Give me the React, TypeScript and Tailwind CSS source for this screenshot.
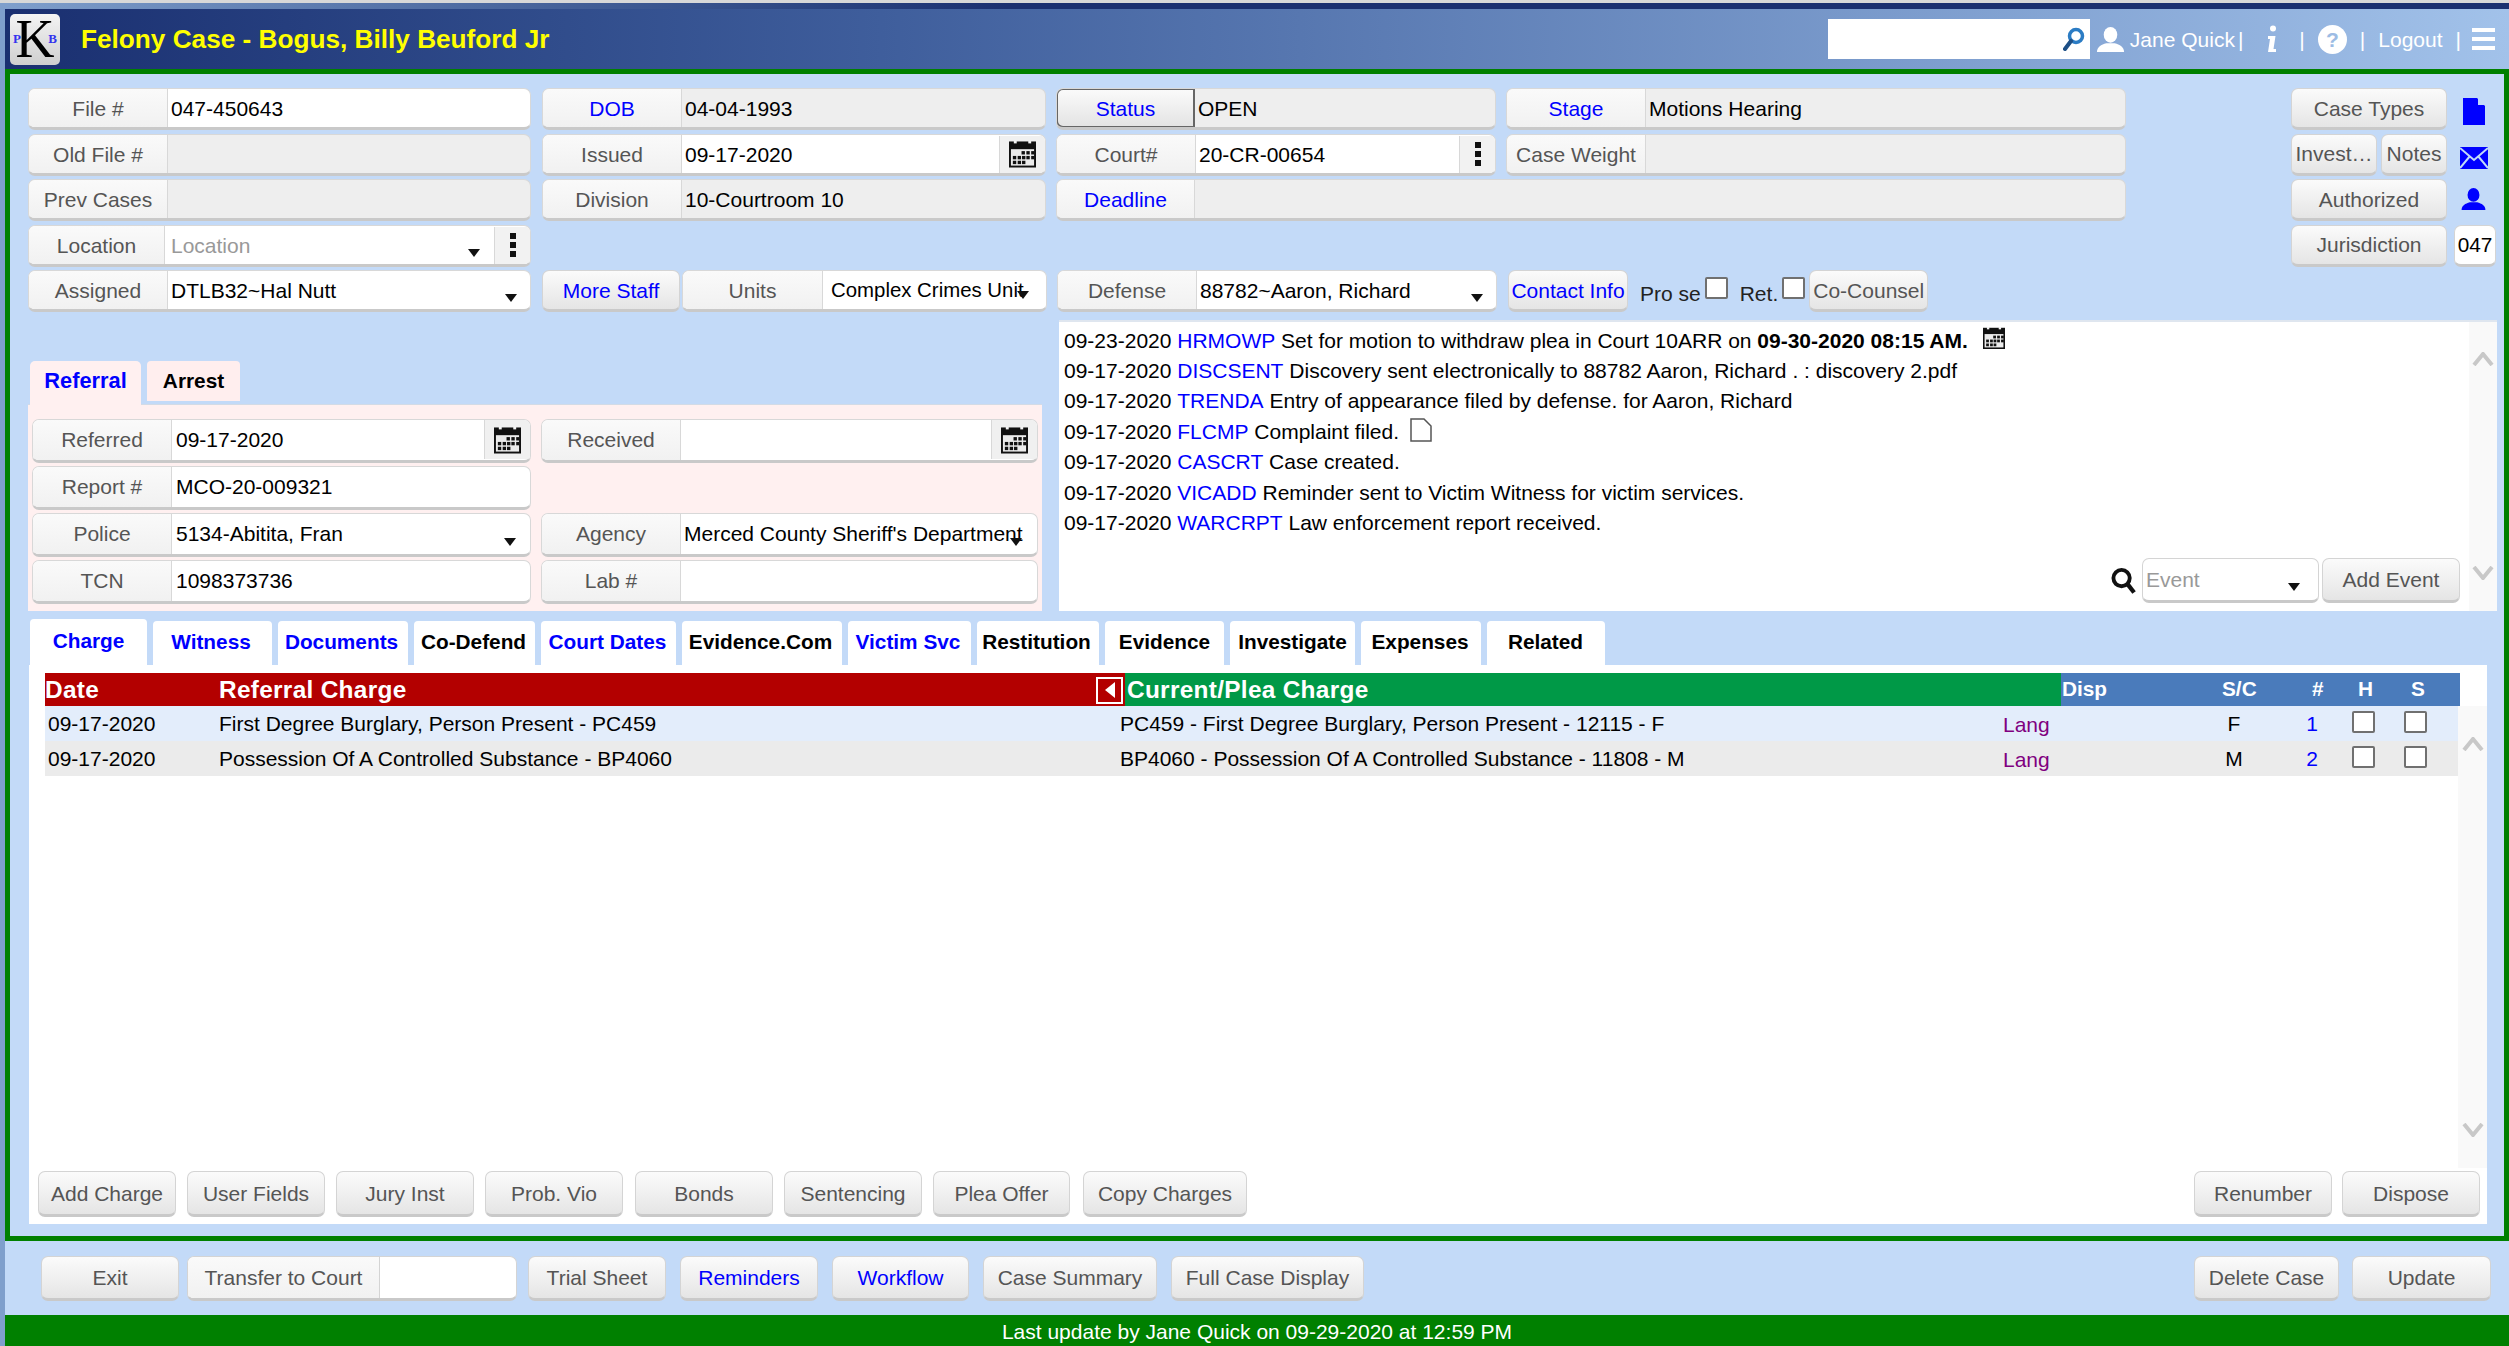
import { ReactNode } from "react"
import clsx from "clsx"

const Caret = ({ className }: { className?: string }) => (
  <svg viewBox="0 0 12 8" className={clsx("absolute h-[8px] w-[12px]", className)}>
    <path d="M0 0h12L6 8z" fill="#111" />
  </svg>
)

const Dots = () => (
  <svg viewBox="0 0 6 24" className="h-[24px] w-[6px]">
    <rect x="0" y="0" width="6" height="6" fill="#111" />
    <rect x="0" y="9" width="6" height="6" fill="#111" />
    <rect x="0" y="18" width="6" height="6" fill="#111" />
  </svg>
)

const calDots = [
  [13, 11],
  [18, 11],
  [23, 11],
  [4, 16],
  [9, 16],
  [13.500, 16],
  [18, 16],
  [23, 16],
  [4, 21],
  [9, 21],
  [13.500, 21],
]

const Calendar = ({ className }: { className?: string }) => (
  <svg viewBox="0 0 28 28" className={className}>
    <rect x="0" y="1" width="28" height="27" fill="#111" />
    <rect x="2" y="9" width="24" height="17" fill="#ececec" />
    <rect x="5" y="0" width="3" height="3" fill="#f4f4f4" />
    <rect x="20" y="0" width="3" height="3" fill="#f4f4f4" />
    {calDots.map(([x, y]) => (
      <rect key={`${x}-${y}`} x={x} y={y} width="3.500" height="3.500" fill="#111" />
    ))}
  </svg>
)

const PersonIcon = ({ className, color }: { className?: string; color: string }) => (
  <svg viewBox="0 0 26 24" className={className}>
    <ellipse cx="13" cy="7.500" rx="6.500" ry="7.500" fill={color} />
    <path d="M0 24c0-5 4-7 9-8.500h8c5 1.500 9 3.500 9 8.500z" fill={color} />
  </svg>
)

const Chevron = ({ up }: { up?: boolean }) => (
  <svg viewBox="0 0 22 14" className="h-[14px] w-[22px]">
    <path d={up ? "M2 13 L11 2 L20 13" : "M2 1 L11 12 L20 1"} fill="none" stroke="#c8c8c8" strokeWidth="4" />
  </svg>
)

const Check = ({ className }: { className?: string }) => (
  <span className={clsx("block h-[22px] w-[23px] shrink-0 rounded-[2px] border-2 border-[#707070] bg-white", className)} />
)

const Btn = ({ w, blue, h = "h-[45px]", children }: { w: string; blue?: boolean; h?: string; children: ReactNode }) => (
  <div
    className={clsx(
      "flex shrink-0 items-center justify-center rounded-[7px] border border-[#d4d4d4] border-b-[3px] border-b-[#c9c9c9] bg-linear-to-b from-[#fbfbfb] to-[#e5e5e5] whitespace-nowrap",
      blue ? "text-[#0000ff]" : "text-[#555]",
      w,
      h,
    )}
  >
    {children}
  </div>
)

const Field = ({
  w,
  labelW,
  label,
  blue,
  h = "h-[42px]",
  gray,
  children,
  labelClass,
}: {
  w: string
  labelW: string
  label: string
  blue?: boolean
  h?: string
  gray?: boolean
  children?: ReactNode
  labelClass?: string
}) => {
  const nudge = h === "h-[42px]" ? "pt-[1px]" : "pb-[1px]"
  return (
    <div
      className={clsx(
        "relative flex shrink-0 overflow-hidden rounded-[7px] border border-[#d8d8d8] border-b-[3px] border-b-[#c9c9c9]",
        gray ? "bg-[#eeeeee]" : "bg-white",
        w,
        h,
      )}
    >
      <div
        className={clsx(
          "flex shrink-0 items-center justify-center bg-linear-to-b",
          blue ? "text-[#0000ff]" : "text-[#555]",
          labelClass ?? "border-r border-[#d8d8d8] from-[#fafafa] to-[#f1f1f1]",
          labelW,
          nudge,
        )}
      >
        {label}
      </div>
      <div className={clsx("flex min-w-0 flex-1 items-center whitespace-nowrap pl-[3px] text-black", nudge)}>{children}</div>
    </div>
  )
}

const SideCal = () => (
  <div className="flex h-full w-[46px] shrink-0 items-center justify-center border-l border-[#d8d8d8] bg-[#f0f0f0]">
    <Calendar className="h-[28px] w-[27px]" />
  </div>
)

const SideDots = () => (
  <div className="flex h-full w-[36px] shrink-0 items-center justify-center border-l border-[#d8d8d8] bg-[#f2f2f2]">
    <Dots />
  </div>
)

const L = ({ children }: { children: ReactNode }) => <span className="text-[#0000ff]">{children}</span>

const events = [
  ["09-17-2020", "DISCSENT", "Discovery sent electronically to 88782 Aaron, Richard . : discovery 2.pdf"],
  ["09-17-2020", "TRENDA", "Entry of appearance filed by defense. for Aaron, Richard"],
]
const eventsAfter = [
  ["09-17-2020", "CASCRT", "Case created."],
  ["09-17-2020", "VICADD", "Reminder sent to Victim Witness for victim services."],
  ["09-17-2020", "WARCRPT", "Law enforcement report received."],
]

const tabs = [
  { t: "Charge", w: "w-[117px]", blue: true, active: true },
  { t: "Witness", w: "w-[119px] pr-[3px]", blue: true },
  { t: "Documents", w: "w-[130px] pr-[3px]", blue: true },
  { t: "Co-Defend", w: "w-[121px] pr-[2px]" },
  { t: "Court Dates", w: "w-[135px] pr-[2px]", blue: true },
  { t: "Evidence.Com", w: "w-[160px] pr-[3px]" },
  { t: "Victim Svc", w: "w-[123px] pr-[3px]", blue: true },
  { t: "Restitution", w: "w-[122px] pr-[3px]" },
  { t: "Evidence", w: "w-[119px]" },
  { t: "Investigate", w: "w-[125px]" },
  { t: "Expenses", w: "w-[120px] pr-[2px]" },
  { t: "Related", w: "w-[118px] pr-[1px]" },
]

const charges = [
  {
    n: "1",
    ref: "First Degree Burglary, Person Present - PC459",
    cur: "PC459 - First Degree Burglary, Person Present - 12115 - F",
    sc: "F",
    bg: "bg-[#e3edfb]",
  },
  {
    n: "2",
    ref: "Possession Of A Controlled Substance - BP4060",
    cur: "BP4060 - Possession Of A Controlled Substance - 11808 - M",
    sc: "M",
    bg: "bg-[#ebebeb]",
  },
]

const App = () => {
  return (
    <div className="h-[1346px] w-[2509px] overflow-hidden bg-[#7f9fcc] pl-[5px] text-[21px] leading-none [font-family:'Liberation_Sans',Arial,sans-serif]">
      <div className="-ml-[5px] h-[3px] bg-[#d8d8d8]" />
      <div className="h-[6px] bg-linear-to-r from-[#7f9fcc] via-[#1b3070] via-40% to-[#1b3070]" />

      {/* header */}
      <div className="flex h-[60px] items-center bg-linear-to-r from-[#1a2f70] via-[#3f5e9c] via-35% to-[#a2c2ea] pl-[5px]">
        <div className="relative flex h-[51px] w-[50px] shrink-0 items-center justify-center rounded-[5px] bg-linear-to-b from-[#f4f4f4] to-[#cfcfcf]">
          <span className="text-[54px] text-black [font-family:'Liberation_Serif',serif]">K</span>
          <span className="absolute left-[3px] top-[18px] text-[13px] font-bold text-[#3333ee] [font-family:'Liberation_Serif',serif]">P</span>
          <span className="absolute right-[3px] top-[18px] text-[13px] font-bold text-[#3333ee] [font-family:'Liberation_Serif',serif]">B</span>
        </div>
        <div className="ml-[21px] whitespace-nowrap text-[26.2px] font-bold text-[#ffff00]">Felony Case - Bogus, Billy Beuford Jr</div>
        <div className="ml-auto flex items-center pr-[14px] text-white">
          <div className="flex h-[40px] w-[262px] items-center justify-end bg-white pr-[5px]">
            <svg viewBox="0 0 22 24" className="h-[24px] w-[22px]">
              <circle cx="13" cy="9" r="6.500" fill="#fff" stroke="#2b7cc4" strokeWidth="3.500" />
              <path d="M8 14 L2 22" stroke="#1d4f86" strokeWidth="4" strokeLinecap="round" />
            </svg>
          </div>
          <PersonIcon className="ml-[6px] h-[25px] w-[29px]" color="#ffffff" />
          <span className="ml-[5px] whitespace-nowrap">Jane Quick</span>
          <span className="ml-[3px]">|</span>
          <svg viewBox="0 0 14 28" className="ml-[22px] h-[28px] w-[14px]">
            <circle cx="8" cy="3.500" r="3" fill="#fff" />
            <path d="M3 11h7.500l-2 13h2.500v3H3l2-13H3z" fill="#fff" />
          </svg>
          <span className="ml-[20px]">|</span>
          <span className="ml-[13px] flex h-[29px] w-[29px] items-center justify-center rounded-full bg-white text-[21px] font-bold text-[#9dbce4]">?</span>
          <span className="ml-[13px]">|</span>
          <span className="ml-[13px]">Logout</span>
          <span className="ml-[13px]">|</span>
          <svg viewBox="0 0 23 24" className="ml-[11px] h-[24px] w-[23px]">
            <rect y="1" width="23" height="4" fill="#fff" />
            <rect y="10" width="23" height="4" fill="#fff" />
            <rect y="19" width="23" height="4" fill="#fff" />
          </svg>
        </div>
      </div>

      {/* main frame */}
      <div className="flex h-[1172px] flex-col border-[5px] border-[#008000] bg-[#c3daf8] pl-[18px] pt-[14px]">
        <div className="flex flex-col gap-y-[3.5px]">
          <div className="flex">
            <Field w="w-[503px]" labelW="w-[139px]" label="File #">047-450643</Field>
            <Field w="w-[504px] ml-[11px]" labelW="w-[139px]" label="DOB" blue gray>04-04-1993</Field>
            <Field
              w="w-[440px] ml-[10px]"
              labelW="w-[139px]"
              label="Status"
              blue
              gray
              labelClass="-my-px -ml-px border-2 border-[#666] rounded-l-[7px] from-[#fafafa] to-[#e4e4e4]"
            >
              OPEN
            </Field>
            <Field w="w-[620px] ml-[10px]" labelW="w-[139px]" label="Stage" blue gray>Motions Hearing</Field>
            <Btn w="w-[156px] ml-[165px]" h="h-[42px]">Case Types</Btn>
            <svg viewBox="0 0 22 27" className="ml-[16px] mt-[10px] h-[27px] w-[22px]">
              <path d="M0 0h14l8 8v19H0z" fill="#0000ff" />
              <path d="M15 0l7 7h-7z" fill="#c3daf8" />
            </svg>
          </div>
          <div className="flex">
            <Field w="w-[503px]" labelW="w-[139px]" label="Old File #" gray />
            <Field w="w-[504px] ml-[11px]" labelW="w-[139px]" label="Issued">
              <span className="flex-1">09-17-2020</span>
              <SideCal />
            </Field>
            <Field w="w-[440px] ml-[10px]" labelW="w-[139px]" label="Court#">
              <span className="flex-1">20-CR-00654</span>
              <SideDots />
            </Field>
            <Field w="w-[620px] ml-[10px]" labelW="w-[139px]" label="Case Weight" gray />
            <Btn w="w-[86px] ml-[165px]" h="h-[42px]">Invest…</Btn>
            <Btn w="w-[66px] ml-[4px]" h="h-[42px]">Notes</Btn>
            <svg viewBox="0 0 28 22" className="ml-[13px] mt-[13px] h-[22px] w-[28px]">
              <path d="M0 0h28v22H0z" fill="#0000ff" />
              <path d="M0 1 L14 13 L28 1 M0 21 L10 9 M28 21 L18 9" fill="none" stroke="#c3daf8" strokeWidth="2" />
            </svg>
          </div>
          <div className="flex">
            <Field w="w-[503px]" labelW="w-[139px]" label="Prev Cases" gray />
            <Field w="w-[504px] ml-[11px]" labelW="w-[139px]" label="Division" gray>10-Courtroom 10</Field>
            <Field w="w-[1070px] ml-[10px]" labelW="w-[138px]" label="Deadline" blue gray />
            <Btn w="w-[156px] ml-[165px]" h="h-[42px]">Authorized</Btn>
            <PersonIcon className="ml-[14px] mt-[9px] h-[22px] w-[25px]" color="#0000ff" />
          </div>
          <div className="flex">
            <Field w="w-[503px]" labelW="w-[136px]" label="Location">
              <span className="flex-1 pl-[3px] text-[#999]">Location</span>
              <SideDots />
              <Caret className="right-[50px] top-[23px]" />
            </Field>
            <Btn w="w-[156px] ml-[1760px]" h="h-[42px]">Jurisdiction</Btn>
            <div className="ml-[7px] flex h-[42px] w-[42px] items-center justify-center rounded-[7px] border border-[#d4d4d4] border-b-[3px] border-b-[#c9c9c9] bg-white pt-[1px] text-[20.8px] text-black">047</div>
          </div>
          <div className="flex items-start">
            <Field w="w-[503px]" labelW="w-[139px]" label="Assigned">
              DTLB32~Hal Nutt
              <Caret className="right-[13px] top-[23px]" />
            </Field>
            <Btn w="w-[138px] ml-[11px]" h="h-[42px]" blue>More Staff</Btn>
            <Field w="w-[365px] ml-[2px]" labelW="w-[140px]" label="Units">
              <span className="pl-[5px] text-[20.4px]">Complex Crimes Unit</span>
              <Caret className="right-[17px] top-[20px]" />
            </Field>
            <Field w="w-[440px] ml-[10px]" labelW="w-[139px]" label="Defense">
              88782~Aaron, Richard
              <Caret className="right-[13px] top-[23px]" />
            </Field>
            <Btn w="w-[120px] ml-[11px]" h="h-[42px]" blue>Contact Info</Btn>
            <span className="ml-[12px] mt-[13px] whitespace-nowrap text-[#222]">Pro se</span>
            <Check className="ml-[4px] mt-[7px]" />
            <span className="ml-[12px] mt-[13px] text-[#222]">Ret.</span>
            <Check className="ml-[4px] mt-[7px]" />
            <Btn w="w-[119px] ml-[4px]" h="h-[42px]">Co-Counsel</Btn>
          </div>
        </div>

        {/* referral + events */}
        <div className="mt-[8px] flex h-[291px]">
          <div className="mt-[41px] flex w-[1014px] flex-col">
            <div className="ml-[2px] flex h-[43px] items-start gap-x-[6px] text-[20.8px] font-bold">
              <div className="z-10 flex h-[44px] w-[111px] items-center justify-center rounded-t-[5px] bg-[#fff0f0] pb-[4px] text-[21.8px] text-[#0000ff]">Referral</div>
              <div className="flex h-[40px] w-[93px] items-center justify-center rounded-t-[4px] bg-[#ffeeee] text-black">Arrest</div>
            </div>
            <div className="flex flex-1 flex-col gap-y-[3px] border-t border-[#d3dbe6] bg-[#fff0f0] pl-[4px] pt-[14px]">
              <div className="flex gap-x-[10px]">
                <Field w="w-[499px]" h="h-[44px]" labelW="w-[139px]" label="Referred">
                  <span className="flex-1 pl-[1px]">09-17-2020</span>
                  <SideCal />
                </Field>
                <Field w="w-[497px]" h="h-[44px]" labelW="w-[139px]" label="Received">
                  <span className="flex-1" />
                  <SideCal />
                </Field>
              </div>
              <div className="flex gap-x-[10px]">
                <Field w="w-[499px]" h="h-[44px]" labelW="w-[139px]" label="Report #">
                  <span className="pl-[1px]">MCO-20-009321</span>
                </Field>
              </div>
              <div className="flex gap-x-[10px]">
                <Field w="w-[499px]" h="h-[44px]" labelW="w-[139px]" label="Police">
                  <span className="pl-[1px]">5134-Abitita, Fran</span>
                  <Caret className="right-[14px] top-[24px]" />
                </Field>
                <Field w="w-[497px]" h="h-[44px]" labelW="w-[139px]" label="Agency">
                  Merced County Sheriff's Department
                  <Caret className="right-[15px] top-[24px]" />
                </Field>
              </div>
              <div className="flex gap-x-[10px]">
                <Field w="w-[499px]" h="h-[44px]" labelW="w-[139px]" label="TCN">
                  <span className="pl-[1px]">1098373736</span>
                </Field>
                <Field w="w-[497px]" h="h-[44px]" labelW="w-[139px]" label="Lab #" />
              </div>
            </div>
          </div>

          <div className="ml-[17px] flex w-[1438px] border-t-2 border-[#dfe6ef] bg-white">
            <div className="flex min-w-0 flex-1 flex-col pl-[5px] pr-[9px] pt-[3px] text-black">
              <div className="flex h-[30.4px] items-center whitespace-nowrap">
                09-23-2020&nbsp;<L>HRMOWP</L>&nbsp;Set for motion to withdraw plea in Court 10ARR on&nbsp;
                <b>09-30-2020 08:15 AM.</b>
                <Calendar className="mb-[5px] ml-[15px] h-[24px] w-[22px]" />
              </div>
              {events.map(([d, c, t]) => (
                <div key={c} className="flex h-[30.4px] items-center whitespace-nowrap">
                  {d}&nbsp;<L>{c}</L>&nbsp;{t}
                </div>
              ))}
              <div className="flex h-[30.4px] items-center whitespace-nowrap">
                09-17-2020&nbsp;<L>FLCMP</L>&nbsp;Complaint filed.
                <svg viewBox="0 0 22 24" className="mb-[3px] ml-[11px] h-[24px] w-[22px]">
                  <path d="M1 1h13l7 7v15H1z" fill="#fff" stroke="#555" strokeWidth="1.500" />
                </svg>
              </div>
              {eventsAfter.map(([d, c, t]) => (
                <div key={c} className="flex h-[30.4px] items-center whitespace-nowrap">
                  {d}&nbsp;<L>{c}</L>&nbsp;{t}
                </div>
              ))}
              <div className="mb-[8px] mt-auto flex items-center justify-end">
                <svg viewBox="0 0 26 28" className="mr-[6px] h-[28px] w-[25px]">
                  <circle cx="11" cy="11" r="8.500" fill="none" stroke="#111" strokeWidth="4" />
                  <path d="M17 17 L24 26" stroke="#111" strokeWidth="4.500" />
                </svg>
                <div className="relative flex h-[45px] w-[177px] items-center rounded-[7px] border border-[#d4d4d4] border-b-[3px] border-b-[#c9c9c9] bg-white pl-[3px] text-[#999]">
                  Event
                  <Caret className="right-[18px] top-[24px]" />
                </div>
                <Btn w="w-[138px] ml-[3px]">Add Event</Btn>
              </div>
            </div>
            <div className="flex w-[28px] shrink-0 flex-col items-center justify-between bg-[#f9f9f9] pb-[31px] pt-[30px]">
              <Chevron up />
              <Chevron />
            </div>
          </div>
        </div>

        {/* charge tabs */}
        <div className="ml-[2px] mt-[10px] flex h-[44px] items-end gap-x-[6px] text-[20.8px] font-bold">
          {tabs.map((t) => (
            <div
              key={t.t}
              className={clsx(
                "flex shrink-0 items-center justify-center rounded-t-[4px] bg-white pb-[1px]",
                t.active ? "h-[46px]" : "h-[44px]",
                t.blue ? "text-[#0000ff]" : "text-black",
                t.w,
              )}
            >
              {t.t}
            </div>
          ))}
        </div>

        {/* charges */}
        <div className="ml-[1px] flex h-[559px] w-[2458px] flex-col bg-white pl-[16px] pt-[8px]">
          <div className="flex h-[33px] w-[2415px] items-center text-[20.8px] font-bold text-white">
            <div className="flex h-full w-[1080px] items-center bg-[#b30000] pt-[1px] text-[24.4px] tracking-[0.3px]">
              <span className="w-[174px]">Date</span>
              <span className="flex-1">Referral Charge</span>
              <span className="mr-[2px] flex h-[27px] w-[27px] items-center justify-center border-2 border-white">
                <svg viewBox="0 0 10 16" className="h-[16px] w-[10px]">
                  <path d="M10 0v16L0 8z" fill="#fff" />
                </svg>
              </span>
            </div>
            <div className="flex h-full w-[936px] items-center bg-[#009947] pl-[2px] pt-[1px] text-[24.4px] tracking-[0.3px]">Current/Plea Charge</div>
            <div className="flex h-full flex-1 items-center bg-[#4a7bbb]">
              <span className="ml-[1px] w-[160px]">Disp</span>
              <span className="w-[90px]">S/C</span>
              <span className="w-[46px]">#</span>
              <span className="w-[53px]">H</span>
              <span>S</span>
            </div>
          </div>
          <div className="flex flex-1">
            <div className="w-[2413px] shrink-0">
              {charges.map((c) => (
                <div key={c.n} className={clsx("flex h-[35px] items-center pb-[1px] text-black", c.bg)}>
                  <span className="w-[174px] pl-[3px]">09-17-2020</span>
                  <span className="w-[901px]">{c.ref}</span>
                  <span className="w-[883px]">{c.cur}</span>
                  <span className="mt-[2px] w-[213px] text-[#800080]">Lang</span>
                  <span className="w-[36px] text-center">{c.sc}</span>
                  <span className="ml-[40px] w-[40px] text-center text-[#0000ff]">{c.n}</span>
                  <Check className="mb-[2px] ml-[20px]" />
                  <Check className="mb-[2px] ml-[29px]" />
                </div>
              ))}
            </div>
            <div className="mb-[3px] flex w-[29px] shrink-0 flex-col items-center justify-between bg-[#f9f9f9] pb-[31px] pt-[31px]">
              <Chevron up />
              <Chevron />
            </div>
          </div>
          <div className="mb-[7px] -ml-[7px] flex pr-[7px]">
            <Btn w="w-[138px]" h="h-[46px]">Add Charge</Btn>
            <Btn w="w-[138px] ml-[11px]" h="h-[46px]">User Fields</Btn>
            <Btn w="w-[138px] ml-[11px]" h="h-[46px]">Jury Inst</Btn>
            <Btn w="w-[138px] ml-[11px]" h="h-[46px]">Prob. Vio</Btn>
            <Btn w="w-[138px] ml-[12px]" h="h-[46px]">Bonds</Btn>
            <Btn w="w-[138px] ml-[11px]" h="h-[46px]">Sentencing</Btn>
            <Btn w="w-[137px] ml-[11px]" h="h-[46px]">Plea Offer</Btn>
            <Btn w="w-[164px] ml-[13px]" h="h-[46px]">Copy Charges</Btn>
            <Btn w="w-[138px] ml-auto" h="h-[46px]">Renumber</Btn>
            <Btn w="w-[138px] ml-[10px]" h="h-[46px]">Dispose</Btn>
          </div>
        </div>
      </div>

      {/* bottom buttons */}
      <div className="flex h-[74px] items-start bg-[#c3daf8] pl-[36px] pt-[15px]">
        <Btn w="w-[138px]">Exit</Btn>
        <div className="ml-[8px] flex h-[45px] w-[330px] shrink-0 overflow-hidden rounded-[7px] border border-[#d4d4d4] border-b-[3px] border-b-[#c9c9c9] bg-white">
          <div className="flex w-[192px] items-center justify-center border-r border-[#d4d4d4] bg-linear-to-b from-[#fafafa] to-[#f1f1f1] text-[#555]">Transfer to Court</div>
        </div>
        <Btn w="w-[138px] ml-[11px]">Trial Sheet</Btn>
        <Btn w="w-[138px] ml-[14px]" blue>Reminders</Btn>
        <Btn w="w-[137px] ml-[14px]" blue>Workflow</Btn>
        <Btn w="w-[174px] ml-[14px]">Case Summary</Btn>
        <Btn w="w-[193px] ml-[14px]">Full Case Display</Btn>
        <Btn w="w-[145px] ml-auto">Delete Case</Btn>
        <Btn w="w-[139px] ml-[13px] mr-[18px]">Update</Btn>
      </div>

      <div className="flex h-[31px] items-center justify-center bg-[#008000] pt-[2px] text-white">Last update by Jane Quick on 09-29-2020 at 12:59 PM</div>
    </div>
  )
}

export default App
